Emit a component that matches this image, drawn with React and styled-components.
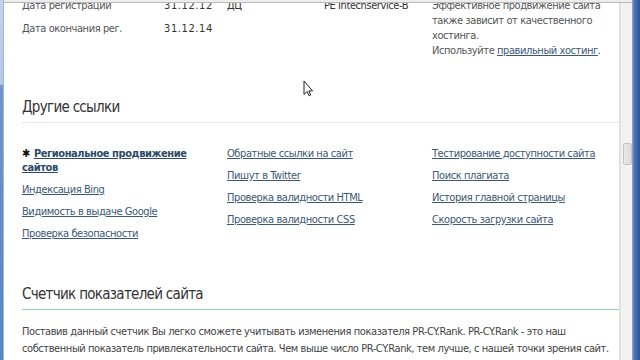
import React from 'react';
import styled, { createGlobalStyle } from 'styled-components';

const GlobalStyle = createGlobalStyle`
  html, body {
    margin: 0;
    padding: 0;
    background: #ffffff;
    overflow: hidden;
  }

  body {
    font-family: "DejaVu Sans Condensed", "DejaVu Sans", sans-serif;
    font-stretch: condensed;
  }
`;

const Window = styled('div')`
  display: flex;
  width: 640px;
  height: 360px;
`;

const LeftFrame = styled('div')`
  width: 4px;
  background: linear-gradient(to bottom, #c3d3e8 0, #b4c9e4 84px, #6f95c9 86px, #5a85c2 100%);
  border-right: 1px solid #9fb6d6;
  box-sizing: border-box;
`;

const RightFrame = styled('div')`
  width: 8px;
  background: linear-gradient(to right, #7e9fd0 0, #7e9fd0 1px, #4a76b6 2px, #3564a8 6px, #2b5393 8px);
`;

const Main = styled('div')`
  flex: 1;
  display: flex;
  flex-direction: column;
  min-width: 0;
`;

const TopEdge = styled('div')`
  height: 2px;
  background: #ededed;
  border-bottom: 1px solid #b9b9b9;
`;

const Body = styled('div')`
  flex: 1;
  display: flex;
  min-height: 0;
`;

const Page = styled('div')`
  flex: 1;
  position: relative;
  overflow: hidden;
  background: #ffffff;
  border-right: 1px solid #dedede;
`;

const Content = styled('div')`
  margin-top: -5px;
  padding-left: 18px;
  font-size: 11px;
  letter-spacing: -0.42px;
  color: #4a4a4a;
`;

const InfoGrid = styled('div')`
  display: grid;
  grid-template-columns: 142px 63px 97px 108px 1fr;
  grid-template-rows: 23px 37px;
  line-height: 15px;
`;

const Label = styled('div')`
  color: #555555;
`;

const Value = styled('div')`
  color: #333333;
  letter-spacing: ${({ $wide }) => ($wide ? '0.6px' : '-0.42px')};
`;

const Note = styled('div')`
  grid-column: 5;
  grid-row: 1 / span 2;
  width: 172px;
  white-space: nowrap;
  color: #555555;
`;

const TextLink = styled('a')`
  color: ${({ $strong }) => ($strong ? '#2c4a68' : '#3b5876')};
  font-weight: ${({ $strong }) => ($strong ? 'bold' : 'normal')};
  text-decoration: underline;
  cursor: pointer;
`;

const SectionTitle = styled('h2')`
  margin: ${({ $gap }) => $gap}px 0 0;
  padding-bottom: 5px;
  font-size: 15px;
  line-height: 20px;
  letter-spacing: -0.7px;
  font-weight: normal;
  color: #333333;
  border-bottom: 1px solid ${({ $accent }) => $accent};
`;

const LinksGrid = styled('div')`
  display: grid;
  grid-template-columns: 205px 205px 1fr;
  margin-top: 24px;
  line-height: 14px;
`;

const LinkColumn = styled('div')`
  display: flex;
  flex-direction: column;
  gap: 8px;
  padding-right: 22px;
`;

const Star = styled('span')`
  color: #111111;
  font-weight: bold;
  margin-right: 4px;
`;

const Paragraph = styled('p')`
  margin: 13px 0 0;
  padding-right: 8px;
  line-height: 17px;
  color: #444444;
`;

const Cursor = styled('svg')`
  position: absolute;
  left: 299px;
  top: 77px;
`;

const Scrollbar = styled('div')`
  width: 12px;
  background: #f2f2f2;
  border-left: 1px solid #e4e4e4;
  padding-top: 140px;
  box-sizing: border-box;
`;

const Thumb = styled('div')`
  width: 7px;
  height: 20px;
  margin-left: 2px;
  background: linear-gradient(to right, #e8e8e8, #dcdcdc);
  border: 1px solid #c4c4c4;
  border-radius: 2px;
`;

const linkColumns = [
  [
    { title: 'Региональное продвижение сайтов', strong: true },
    { title: 'Индексация Bing' },
    { title: 'Видимость в выдаче Google' },
    { title: 'Проверка безопасности' },
  ],
  [
    { title: 'Обратные ссылки на сайт' },
    { title: 'Пишут в Twitter' },
    { title: 'Проверка валидности HTML' },
    { title: 'Проверка валидности CSS' },
  ],
  [
    { title: 'Тестирование доступности сайта' },
    { title: 'Поиск плагиата' },
    { title: 'История главной страницы' },
    { title: 'Скорость загрузки сайта' },
  ],
];

const App = () => {
  return (
    <Window>
      <GlobalStyle />
      <LeftFrame />
      <Main>
        <TopEdge />
        <Body>
          <Page>
            <Content>
              <InfoGrid>
                <Label>Дата регистрации</Label>
                <Value $wide>31.12.12</Value>
                <Value>ДЦ</Value>
                <Value>PE Intechservice-B</Value>
                <Note>
                  Эффективное продвижение сайта<br />
                  также зависит от качественного<br />
                  хостинга.<br />
                  Используйте <TextLink>правильный хостинг</TextLink>.
                </Note>
                <Label>Дата окончания рег.</Label>
                <Value $wide>31.12.14</Value>
              </InfoGrid>

              <SectionTitle $gap={39} $accent='#e8e8e8'>Другие ссылки</SectionTitle>
              <LinksGrid>
                {
                  linkColumns.map((column, i) => (
                    <LinkColumn key={i}>
                      {
                        column.map(link => (
                          <div key={link.title}>
                            {link.strong && <Star>✱</Star>}
                            <TextLink $strong={link.strong}>{link.title}</TextLink>
                          </div>
                        ))
                      }
                    </LinkColumn>
                  ))
                }
              </LinksGrid>

              <SectionTitle $gap={43} $accent='#93d2ac'>Счетчик показателей сайта</SectionTitle>
              <Paragraph>
                Поставив данный счетчик Вы легко сможете учитывать изменения показателя PR-CY.Rank. PR-CY.Rank - это наш
                собственный показатель привлекательности сайта. Чем выше число PR-CY.Rank, тем лучше, с нашей точки зрения сайт.
                PR-CY.Rank складывается из всех основных показателей сайта. Также вы можете поставить счетчик тИЦ и PR или же
                счетчик посещаемости.
              </Paragraph>
            </Content>
            <Cursor width='12' height='19' viewBox='0 0 12 19'>
              <path d='M4.5 3.5 L4.5 17 L7.6 14 L9.6 18.3 L11.2 17.6 L9.3 13.4 L13 13.4 Z' fill='#ffffff' stroke='#222222' strokeWidth='1' strokeLinejoin='round' transform='translate(-3.5 -2.5)' />
            </Cursor>
          </Page>
          <Scrollbar>
            <Thumb />
          </Scrollbar>
        </Body>
      </Main>
      <RightFrame />
    </Window>
  );
};

export default App;
